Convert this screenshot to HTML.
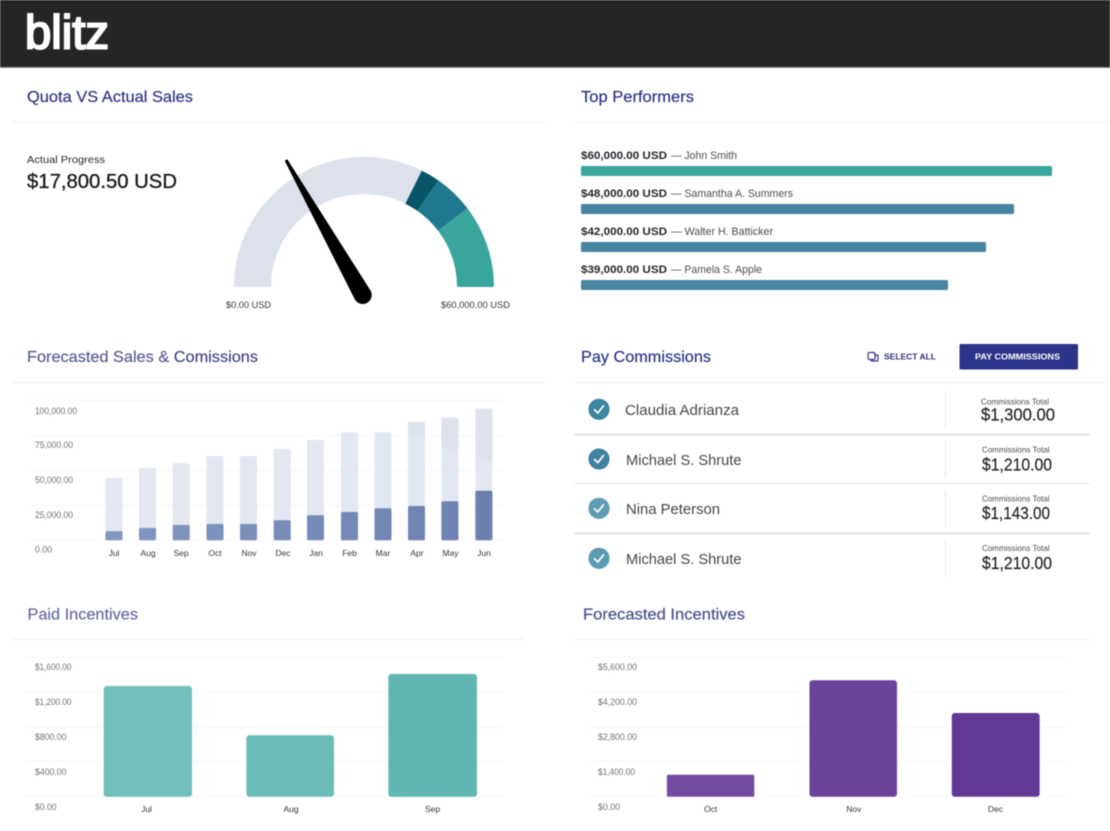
<!DOCTYPE html>
<html lang="en"><head><meta charset="utf-8"><title>Blitz dashboard</title>
<style>
html,body{margin:0;padding:0;background:#fff;width:1110px;height:831px;overflow:hidden}
svg{display:block;filter:blur(.45px)}
text{font-family:"Liberation Sans",sans-serif}
.t{font-size:16px;stroke:currentColor;stroke-width:.15px}
.ax{font-size:9px;fill:#6f7175}
.mo{font-size:8.5px;fill:#34363c;text-anchor:middle}
.amt{font-size:11px;font-weight:bold;fill:#24262c}
.nm{font-size:11px;fill:#4a4c51}
.pn{font-size:15px;fill:#43454a}
.ct{font-size:8.5px;fill:#494b50}
.am{font-size:17.5px;fill:#1f2126;stroke:#1f2126;stroke-width:.2px}
.ln{stroke:#f0f1f3;stroke-width:1.2}
.gr{stroke:#f4f5f6;stroke-width:1}
.chk{fill:none;stroke:#fff;stroke-width:1.7;stroke-linecap:round;stroke-linejoin:round}
</style></head><body>
<svg width="1110" height="831" viewBox="0 0 1110 831" xmlns="http://www.w3.org/2000/svg">
<rect width="1110" height="831" fill="#fff"/>
<rect width="1110" height="67" fill="#252525"/>
<rect y="67" width="1110" height="1" fill="#8d8d8d"/>
<text x="25" y="48.500" font-size="47" fill="#fff" stroke="#fff" stroke-width="2" textLength="84" lengthAdjust="spacingAndGlyphs">blitz</text>

<text class="t" x="27" y="102" fill="#282f80" color="#282f80" textLength="166" lengthAdjust="spacingAndGlyphs">Quota VS Actual Sales</text>
<line class="ln" x1="12" y1="122" x2="545" y2="122"/>
<text x="27" y="163" font-size="10.5" fill="#26282e" textLength="78" lengthAdjust="spacingAndGlyphs">Actual Progress</text>
<text x="27" y="188" font-size="20" fill="#15171c" stroke="#15171c" stroke-width=".3" textLength="150" lengthAdjust="spacingAndGlyphs">$17,800.50 USD</text>

<path d="M234 285.500A130 130 0 0 1 421.800 170.600L405.300 203.700A93 93 0 0 0 271 285.500Q271 287 269.500 287H235.500Q234 287 234 285.500Z" fill="#dde1ec"/>
<path d="M421.800 170.600A130 130 0 0 1 438.600 180.500L417.300 210.800A93 93 0 0 0 405.300 203.700Z" fill="#065667"/>
<path d="M438.600 180.500A130 130 0 0 1 467.500 208.400L438.100 230.800A93 93 0 0 0 417.300 210.800Z" fill="#20788e"/>
<path d="M467.500 208.400A130 130 0 0 1 494 285.500Q494 287 492.500 287H458.500Q457 287 457 285.500A93 93 0 0 0 438.100 230.800Z" fill="#39a69e"/>
<path d="M287.300 159.300L370.500 290.500A9 9 0 1 1 354.800 299.300L284.700 160.700Z" fill="#000"/>
<text x="226" y="308" font-size="9" fill="#34363c" textLength="45" lengthAdjust="spacingAndGlyphs">$0.00 USD</text>
<text x="441" y="308" font-size="9" fill="#34363c" textLength="69" lengthAdjust="spacingAndGlyphs">$60,000.00 USD</text>

<text class="t" x="581" y="102" fill="#282f80" color="#282f80" textLength="113" lengthAdjust="spacingAndGlyphs">Top Performers</text>
<line class="ln" x1="574" y1="122" x2="1110" y2="122"/>
<text class="amt" x="581" y="159" textLength="86" lengthAdjust="spacingAndGlyphs">$60,000.00 USD</text>
<text class="nm" x="671" y="159" textLength="66" lengthAdjust="spacingAndGlyphs">— John Smith</text>
<rect x="581" y="166" width="471" height="10" rx="1.500" fill="#3aa69d"/>
<text class="amt" x="581" y="197" textLength="86" lengthAdjust="spacingAndGlyphs">$48,000.00 USD</text>
<text class="nm" x="671" y="197" textLength="122" lengthAdjust="spacingAndGlyphs">— Samantha A. Summers</text>
<rect x="581" y="204" width="433" height="10" rx="1.500" fill="#4785a2"/>
<text class="amt" x="581" y="235" textLength="86" lengthAdjust="spacingAndGlyphs">$42,000.00 USD</text>
<text class="nm" x="671" y="235" textLength="102" lengthAdjust="spacingAndGlyphs">— Walter H. Batticker</text>
<rect x="581" y="242" width="405" height="10" rx="1.500" fill="#4785a2"/>
<text class="amt" x="581" y="273" textLength="86" lengthAdjust="spacingAndGlyphs">$39,000.00 USD</text>
<text class="nm" x="671" y="273" textLength="91" lengthAdjust="spacingAndGlyphs">— Pamela S. Apple</text>
<rect x="581" y="280" width="367" height="10" rx="1.500" fill="#4785a2"/>

<text class="t" x="27" y="362" textLength="231" lengthAdjust="spacingAndGlyphs" fill="#555a92" color="#555a92">Forecasted Sales &amp; <tspan fill="#383e79">Comissions</tspan></text>
<line class="ln" x1="12" y1="382.500" x2="545" y2="382.500"/>
<g class="gr"><line x1="28" y1="400.500" x2="501" y2="400.500"/><line x1="28" y1="435.500" x2="501" y2="435.500"/><line x1="28" y1="470.500" x2="501" y2="470.500"/><line x1="28" y1="505.500" x2="501" y2="505.500"/><line x1="28" y1="540.500" x2="501" y2="540.500"/></g>
<text class="ax" x="35" y="414" textLength="42" lengthAdjust="spacingAndGlyphs">100,000.00</text>
<text class="ax" x="35" y="448" textLength="38" lengthAdjust="spacingAndGlyphs">75,000.00</text>
<text class="ax" x="35" y="483" textLength="38" lengthAdjust="spacingAndGlyphs">50,000.00</text>
<text class="ax" x="35" y="518" textLength="38" lengthAdjust="spacingAndGlyphs">25,000.00</text>
<text class="ax" x="35" y="552.500" textLength="17" lengthAdjust="spacingAndGlyphs">0.00</text>
<g fill="#e2e7f1">
<rect x="105.500" y="477.700" width="17" height="62.500" rx="1.500"/>
<rect x="139" y="468" width="17" height="72" rx="1.500"/>
<rect x="172.700" y="463.300" width="17" height="77" rx="1.500"/>
<rect x="206.500" y="456" width="17" height="84" rx="1.500"/>
<rect x="240" y="456" width="17" height="84" rx="1.500"/>
<rect x="273.700" y="448.700" width="17" height="91.500" rx="1.500"/>
<rect x="307" y="440" width="17" height="100" rx="1.500"/>
<rect x="341" y="432.300" width="17" height="108" rx="1.500"/>
<rect x="374.500" y="432.300" width="17" height="108" rx="1.500"/>
<rect x="408" y="422" width="17" height="118" rx="1.500"/>
<rect x="441.400" y="417.700" width="17" height="122.500" rx="1.500"/>
<rect x="475.400" y="408.700" width="17" height="131.500" rx="1.500"/>
</g>
<g fill="#dde2ed">
<path d="M408 423.500Q408 422 409.500 422H423.500Q425 422 425 423.500V438.500L408 434.500Z"/>
<path d="M441.400 419.200Q441.400 417.700 442.900 417.700H456.900Q458.400 417.700 458.400 419.200V450.700L441.400 446.500Z"/>
<path d="M475.400 410.200Q475.400 408.700 476.900 408.700H490.900Q492.400 408.700 492.400 410.200V462.500L475.400 456.500Z"/>
</g>
<rect x="105.500" y="531.300" width="17" height="9" rx="1.500" fill="#8297be"/>
<rect x="139" y="528" width="17" height="12.300" rx="1.500" fill="#8095bd"/>
<rect x="172.700" y="525" width="17" height="15.300" rx="1.500" fill="#7e93bc"/>
<rect x="206.500" y="524" width="17" height="16.300" rx="1.500" fill="#7c91bb"/>
<rect x="240" y="524" width="17" height="16.300" rx="1.500" fill="#7a8fba"/>
<rect x="273.700" y="520.300" width="17" height="20" rx="1.500" fill="#788db8"/>
<rect x="307" y="515.300" width="17" height="25" rx="1.500" fill="#768bb7"/>
<rect x="341" y="512" width="17" height="28.300" rx="1.500" fill="#7489b6"/>
<rect x="374.500" y="508.300" width="17" height="32" rx="1.500" fill="#7287b4"/>
<rect x="408" y="506" width="17" height="34.300" rx="1.500" fill="#7085b2"/>
<rect x="441.400" y="501.300" width="17" height="39" rx="1.500" fill="#6e83b1"/>
<rect x="475.400" y="490.700" width="17" height="49.500" rx="1.500" fill="#6b80ae"/>
<g>
<text class="mo" x="114" y="556">Jul</text><text class="mo" x="148" y="556">Aug</text><text class="mo" x="181" y="556">Sep</text><text class="mo" x="215" y="556">Oct</text><text class="mo" x="249" y="556">Nov</text><text class="mo" x="283" y="556">Dec</text><text class="mo" x="316" y="556">Jan</text><text class="mo" x="349.500" y="556">Feb</text><text class="mo" x="383" y="556">Mar</text><text class="mo" x="417" y="556">Apr</text><text class="mo" x="450.500" y="556">May</text><text class="mo" x="484" y="556">Jun</text>
</g>

<text class="t" x="581" y="362" fill="#282f80" color="#282f80" textLength="130" lengthAdjust="spacingAndGlyphs">Pay Commissions</text>
<g fill="none" stroke="#2f3680" stroke-width="1.200"><rect x="868" y="352.500" width="7" height="7" rx="1.500"/><path d="M875.500 355H877Q878 355 878 356V359.500Q878 361 876.500 361H872.500Q871 361 871 360"/></g>
<text x="884" y="359.500" font-size="8" font-weight="bold" fill="#2b3278" textLength="52" lengthAdjust="spacingAndGlyphs">SELECT ALL</text>
<rect x="959.500" y="344" width="118.500" height="25.500" rx="1.500" fill="#2b3488"/>
<text x="975" y="359.500" font-size="8" font-weight="bold" fill="#fff" textLength="85" lengthAdjust="spacingAndGlyphs">PAY COMMISSIONS</text>
<line class="ln" x1="574" y1="382.500" x2="1106" y2="382.500"/>

<circle cx="599" cy="409.300" r="10.600" fill="#3f84a0"/>
<path class="chk" d="M594.500 409.800L597.800 413L603.500 405.800"/>
<text class="pn" x="625" y="415" textLength="114" lengthAdjust="spacingAndGlyphs">Claudia Adrianza</text>
<line x1="945.500" y1="391" x2="945.500" y2="428" stroke="#e6e7e9"/>
<text class="ct" x="981" y="404.500" textLength="68" lengthAdjust="spacingAndGlyphs">Commissions Total</text>
<text class="am" x="981" y="420.500" textLength="74" lengthAdjust="spacingAndGlyphs">$1,300.00</text>
<line x1="574" y1="434.500" x2="1090" y2="434.500" stroke="#dcdde0" stroke-width="1.400"/>

<circle cx="599" cy="459" r="10.600" fill="#41829e"/>
<path class="chk" d="M594.500 459.500L597.800 462.700L603.500 455.500"/>
<text class="pn" x="626" y="465" textLength="115.500" lengthAdjust="spacingAndGlyphs">Michael S. Shrute</text>
<line x1="945.500" y1="441" x2="945.500" y2="478" stroke="#e6e7e9"/>
<text class="ct" x="982" y="452.500" textLength="67.500" lengthAdjust="spacingAndGlyphs">Commissions Total</text>
<text class="am" x="982" y="470.500" textLength="70" lengthAdjust="spacingAndGlyphs">$1,210.00</text>
<line x1="574" y1="483.500" x2="1090" y2="483.500" stroke="#e6e7e9"/>

<circle cx="599" cy="508.300" r="10.600" fill="#5d9db3"/>
<path class="chk" d="M594.500 508.800L597.800 512L603.500 504.800"/>
<text class="pn" x="626" y="514" textLength="94" lengthAdjust="spacingAndGlyphs">Nina Peterson</text>
<line x1="945.500" y1="490" x2="945.500" y2="527" stroke="#e6e7e9"/>
<text class="ct" x="982" y="501.500" textLength="67.500" lengthAdjust="spacingAndGlyphs">Commissions Total</text>
<text class="am" x="982" y="519" textLength="68" lengthAdjust="spacingAndGlyphs">$1,143.00</text>
<line x1="574" y1="533.500" x2="1090" y2="533.500" stroke="#dcdde0" stroke-width="1.400"/>

<circle cx="599" cy="558.300" r="10.600" fill="#5c9cb2"/>
<path class="chk" d="M594.500 558.800L597.800 562L603.500 554.800"/>
<text class="pn" x="626" y="564" textLength="115.500" lengthAdjust="spacingAndGlyphs">Michael S. Shrute</text>
<line x1="945.500" y1="540" x2="945.500" y2="577" stroke="#e6e7e9"/>
<text class="ct" x="982" y="551" textLength="67.500" lengthAdjust="spacingAndGlyphs">Commissions Total</text>
<text class="am" x="982" y="569" textLength="70" lengthAdjust="spacingAndGlyphs">$1,210.00</text>

<text class="t" x="27.500" y="619.500" fill="#6267a0" color="#6267a0" textLength="110.500" lengthAdjust="spacingAndGlyphs">Paid Incentives</text>
<line class="ln" x1="13" y1="639.500" x2="524" y2="639.500"/>
<g class="gr"><line x1="27" y1="657.500" x2="501" y2="657.500"/><line x1="27" y1="692.500" x2="501" y2="692.500"/><line x1="27" y1="727.500" x2="501" y2="727.500"/><line x1="27" y1="761.500" x2="501" y2="761.500"/><line x1="27" y1="796.500" x2="501" y2="796.500"/></g>
<text class="ax" x="35" y="670" textLength="36.500" lengthAdjust="spacingAndGlyphs">$1,600.00</text>
<text class="ax" x="35" y="705" textLength="36.500" lengthAdjust="spacingAndGlyphs">$1,200.00</text>
<text class="ax" x="35" y="740" textLength="31.500" lengthAdjust="spacingAndGlyphs">$800.00</text>
<text class="ax" x="35" y="775" textLength="31.500" lengthAdjust="spacingAndGlyphs">$400.00</text>
<text class="ax" x="35" y="810" textLength="21.500" lengthAdjust="spacingAndGlyphs">$0.00</text>
<rect x="103.700" y="686" width="88.300" height="110.800" rx="3" fill="#72bfb9"/>
<rect x="246.400" y="735.300" width="87.600" height="61.500" rx="3" fill="#6bbbb6"/>
<rect x="388.300" y="674" width="88.700" height="122.800" rx="3" fill="#60b6b1"/>
<text class="mo" x="146.500" y="812">Jul</text><text class="mo" x="291" y="812">Aug</text><text class="mo" x="432.500" y="812">Sep</text>

<text class="t" x="583" y="619.500" fill="#454a8a" color="#454a8a" textLength="162" lengthAdjust="spacingAndGlyphs">Forecasted Incentives</text>
<line class="ln" x1="576" y1="639.500" x2="1088" y2="639.500"/>
<g class="gr"><line x1="590" y1="657.500" x2="1064" y2="657.500"/><line x1="590" y1="692.500" x2="1064" y2="692.500"/><line x1="590" y1="727.500" x2="1064" y2="727.500"/><line x1="590" y1="761.500" x2="1064" y2="761.500"/><line x1="590" y1="796.500" x2="1064" y2="796.500"/></g>
<text class="ax" x="598" y="670" textLength="39" lengthAdjust="spacingAndGlyphs">$5,600.00</text>
<text class="ax" x="598" y="705" textLength="39" lengthAdjust="spacingAndGlyphs">$4,200.00</text>
<text class="ax" x="598" y="740" textLength="39" lengthAdjust="spacingAndGlyphs">$2,800.00</text>
<text class="ax" x="598" y="775" textLength="37" lengthAdjust="spacingAndGlyphs">$1,400.00</text>
<text class="ax" x="598" y="810" textLength="22" lengthAdjust="spacingAndGlyphs">$0.00</text>
<rect x="666.900" y="774.700" width="87.400" height="22" rx="1.500" fill="#734ba0"/>
<rect x="809.500" y="680.300" width="87.500" height="116.500" rx="3" fill="#6a429a"/>
<rect x="951.800" y="713" width="87.800" height="83.800" rx="3" fill="#623996"/>
<text class="mo" x="710.800" y="812">Oct</text><text class="mo" x="853.800" y="812">Nov</text><text class="mo" x="995.400" y="812">Dec</text>
</svg>
</body></html>
